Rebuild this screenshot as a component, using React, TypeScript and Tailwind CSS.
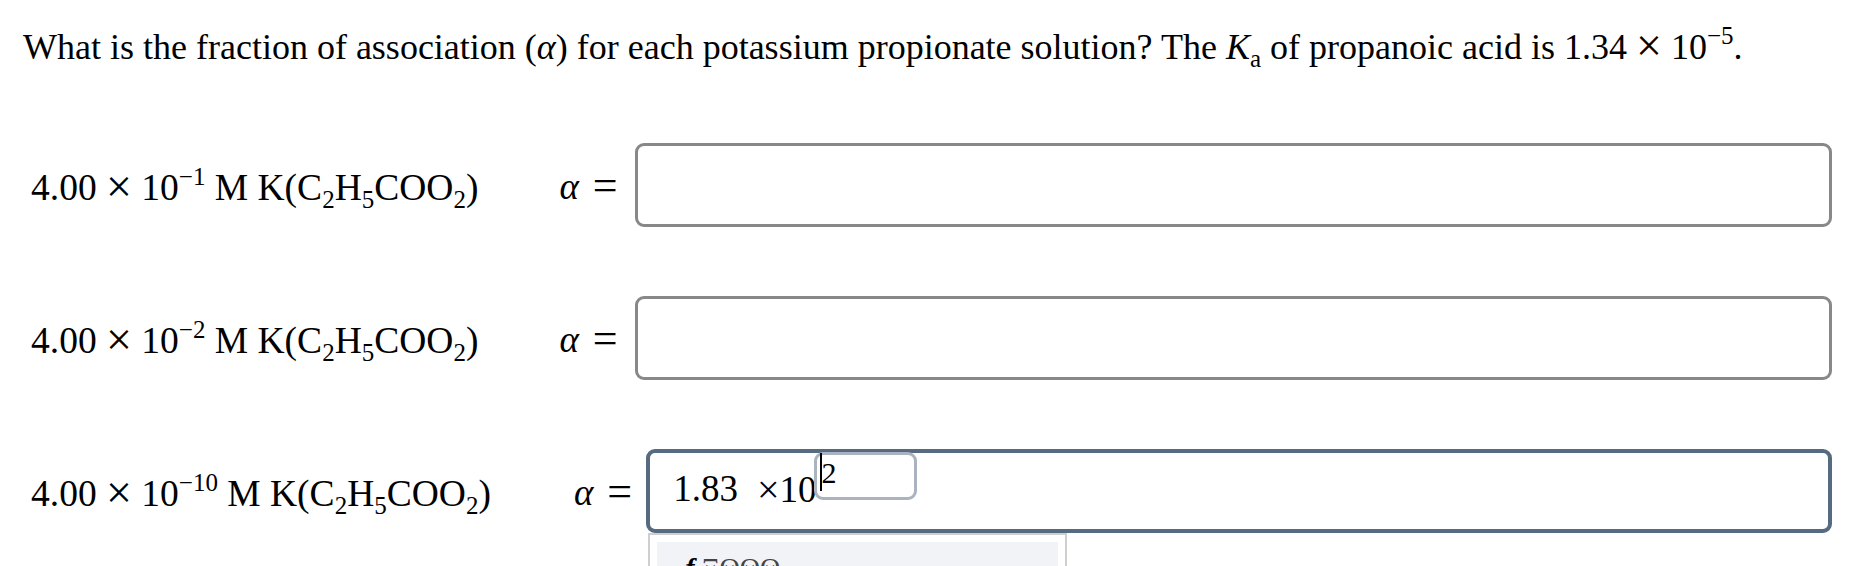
import React from "react";

const serif = "font-['Liberation_Serif','Times_New_Roman',serif]";

function Sup({ children }: { children: React.ReactNode }) {
  return <span className="relative top-[-15px] text-[25px] leading-none">{children}</span>;
}

function Sub({ children }: { children: React.ReactNode }) {
  return <span className="relative top-[8px] text-[25px] leading-none">{children}</span>;
}

function Times() {
  return <span className="relative top-[2px] text-[46px] leading-none">×</span>;
}

function Formula({ exp }: { exp: string }) {
  return (
    <span className="whitespace-nowrap text-[37.5px]">
      4.00 <Times /> 10<Sup>{exp}</Sup> M K(C<Sub>2</Sub>H<Sub>5</Sub>COO<Sub>2</Sub>)
    </span>
  );
}

function Alpha() {
  return (
    <span className="whitespace-nowrap text-[37px]">
      <i>α</i>
      <span className="relative top-[1px] ml-[14px] text-[44px] leading-none">=</span>
    </span>
  );
}

function EmptyRow({ exp }: { exp: string }) {
  return (
    <div className="flex items-center">
      <Formula exp={exp} />
      <div className="ml-[81px]">
        <Alpha />
      </div>
      <div className="ml-[17px] flex-1 h-[84px] rounded-[9px] border-[3px] border-[#888888] bg-white" />
    </div>
  );
}

export default function App() {
  return (
    <div className={`w-[1858px] h-[566px] overflow-hidden bg-white text-black ${serif} text-[36px]`}>
      <p className="h-[61px] pl-[23px] pt-[21px] leading-[40px] whitespace-nowrap">
        What is the fraction of association (<i>α</i>) for each potassium propionate solution? The{" "}
        <i>K</i>
        <Sub>a</Sub> of propanoic acid is 1.34 <Times /> 10<Sup>−5</Sup>.
      </p>

      <div className="mt-[82px] pl-[31px] pr-[26px] flex flex-col gap-[69px] leading-[40px]">
        <EmptyRow exp="−1" />
        <EmptyRow exp="−2" />

        <div className="flex items-center">
          <Formula exp="−10" />
          <div className="ml-[83px]">
            <Alpha />
          </div>
          <div className="relative ml-[14px] flex-1">
            <div className="flex items-start h-[84px] rounded-[9px] border-4 border-[#566a80] bg-white pl-[23px]">
              <span className="mt-[16px] text-[37px] leading-[40px]">1.83</span>
              <span className="ml-[19px] mt-[16px] text-[37px] leading-[40px]">
                <span className="relative top-[1px] text-[40px] leading-none">×</span>10
              </span>
              <div className="relative -mt-[1px] -ml-[2px] w-[103px] h-[48px] rounded-[9px] border-[3px] border-[#a9b4c0]">
                <span className="absolute left-[3px] top-[-2px] w-[2px] h-[38px] bg-black" />
                <span className="absolute left-[4px] top-[2px] text-[30px] leading-[32px]">2</span>
              </div>
            </div>
            <div className="absolute left-[2px] top-full w-[419px] h-[60px] border-2 border-[#cfcfcf] bg-white p-[7px]">
              <div className="h-full bg-[#f2f3f6] pl-[28px] pt-[10px] text-[28px] leading-[32px] text-[#444]">
                <b className="text-black">
                  <i>f</i>
                </b>{" "}
                ΞΘΘΘ
              </div>
            </div>
          </div>
        </div>
      </div>
    </div>
  );
}
